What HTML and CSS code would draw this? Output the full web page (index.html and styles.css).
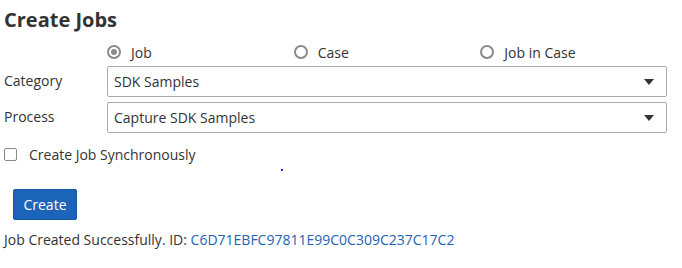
FILE: index.html
```html
<!DOCTYPE html>
<html lang="en">
<head>
	<meta charset="UTF-8">
	<title>Create Jobs</title>
	<link rel="stylesheet" href="styles.css">
</head>
<body>
	<main class="page">
		<h1 class="title">Create Jobs</h1>
		<form class="jobform">
			<div class="row types-row">
				<span class="label"></span>
				<div class="types">
					<label class="radio"><span class="dot on"></span>Job</label>
					<label class="radio"><span class="dot"></span>Case</label>
					<label class="radio"><span class="dot"></span>Job in Case</label>
				</div>
			</div>
			<div class="row">
				<span class="label">Category</span>
				<div class="select">SDK Samples<span class="caret"></span></div>
			</div>
			<div class="row">
				<span class="label">Process</span>
				<div class="select">Capture SDK Samples<span class="caret"></span></div>
			</div>
			<label class="check"><span class="box"></span>Create Job Synchronously</label>
			<div class="spinner"><span></span></div>
			<button type="button" class="btn">Create</button>
			<p class="result">Job Created Successfully. ID: <a href="#">C6D71EBFC97811E99C0C309C237C17C2</a></p>
		</form>
	</main>
</body>
</html>
```

FILE: styles.css
```css
body,main,h1,p,form{
	margin: 0; padding: 0;
}
*{ box-sizing: border-box; }
body{
	font-family: "Open Sans", "Noto Sans", sans-serif;
	font-size: 14px;
	color: #333;
	background: #fff;
}
.page{ padding: 4px 15px 0 4px; }
.title{
	font-size: 20px;
	font-weight: 700;
	line-height: 28px;
	color: #333;
	margin-top: 2px;
}
.jobform{ margin-top: 6px; }
.row{
	display: grid;
	grid-template-columns: 103px 1fr;
	align-items: center;
	margin-bottom: 5px;
}
.types-row{ margin-bottom: 2px; }
.label{ padding-bottom: 2px; }
.types{
	display: grid;
	grid-template-columns: repeat(3, 1fr);
	height: 24px;
	align-items: center;
}
.radio{
	display: flex;
	align-items: center;
	color: #333;
}
.dot{
	width: 14px; height: 14px;
	border: 2px solid #8a8a8a;
	border-radius: 50%;
	margin: 0 10px 0 0;
	position: relative;
}
.dot.on::after{
	content: "";
	position: absolute; left: 2px; top: 2px;
	width: 6px; height: 6px;
	border-radius: 50%;
	background: #8a8a8a;
}
.select{
	height: 31px;
	border: 1px solid #aaa;
	border-radius: 2px;
	padding: 0 12px 0 6px;
	display: flex;
	align-items: center;
	justify-content: space-between;
}
.caret{
	width: 0; height: 0;
	border-left: 5px solid transparent;
	border-right: 5px solid transparent;
	border-top: 6px solid #333;
}
.check{
	display: flex;
	align-items: center;
	margin-top: 10px;
	height: 22px;
}
.box{
	width: 13px; height: 13px;
	border: 1px solid #888;
	border-radius: 2px;
	margin: 0 12px 0 0;
}
.spinner{
	height: 20px;
}
.spinner span{
	display: block;
	width: 2px; height: 2px;
	background: #2233dd;
	margin: 4px 0 0 277px;
}
.btn{
	display: block;
	margin-left: 9px;
	width: 64px; height: 31px;
	border: 1px solid #155a9e;
	border-radius: 2px;
	background: #1c64b8;
	color: #fff;
	font: inherit;
	font-size: 14px;
	padding: 0;
}
.result{
	margin-top: 10px;
	line-height: 20px;
}
.result a{
	color: #1d63b4;
	text-decoration: none;
}
```
